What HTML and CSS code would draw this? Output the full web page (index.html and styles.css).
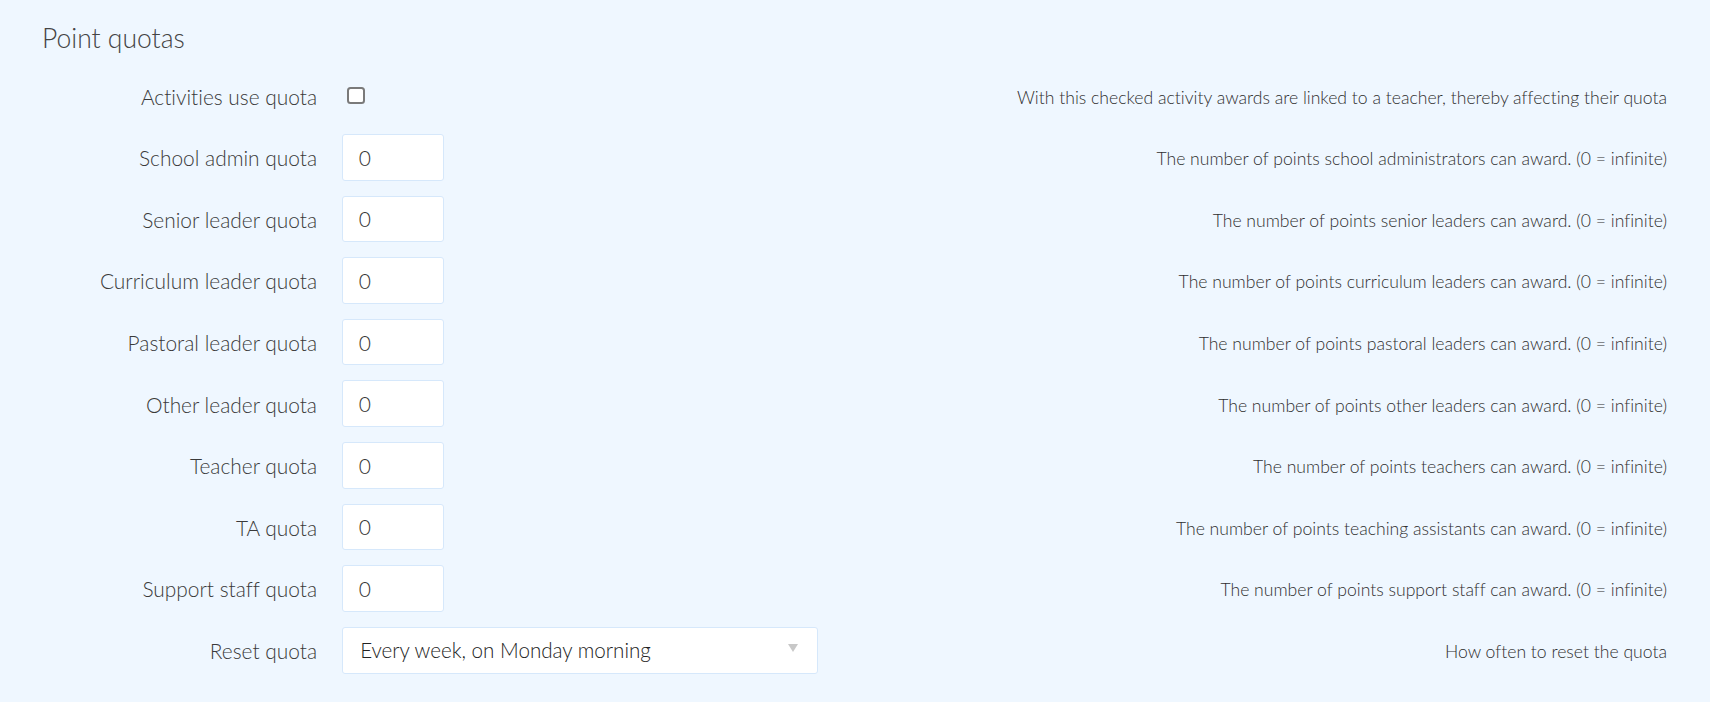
FILE: index.html
```html
<!DOCTYPE html>
<html lang="en">
<head>
<meta charset="utf-8">
<title>Point quotas</title>
<link rel="stylesheet" href="styles.css">
</head>
<body>
<div class="page">
  <h2 class="title">Point quotas</h2>
  <div class="form">
    <label class="label">Activities use quota</label>
    <div class="control"><span class="checkbox"></span></div>
    <div class="desc">With this checked activity awards are linked to a teacher, thereby affecting their quota</div>

    <label class="label">School admin quota</label>
    <div class="control"><div class="input">0</div></div>
    <div class="desc">The number of points school administrators can award. (0 = infinite)</div>

    <label class="label">Senior leader quota</label>
    <div class="control"><div class="input">0</div></div>
    <div class="desc">The number of points senior leaders can award. (0 = infinite)</div>

    <label class="label">Curriculum leader quota</label>
    <div class="control"><div class="input">0</div></div>
    <div class="desc">The number of points curriculum leaders can award. (0 = infinite)</div>

    <label class="label">Pastoral leader quota</label>
    <div class="control"><div class="input">0</div></div>
    <div class="desc">The number of points pastoral leaders can award. (0 = infinite)</div>

    <label class="label">Other leader quota</label>
    <div class="control"><div class="input">0</div></div>
    <div class="desc">The number of points other leaders can award. (0 = infinite)</div>

    <label class="label">Teacher quota</label>
    <div class="control"><div class="input">0</div></div>
    <div class="desc">The number of points teachers can award. (0 = infinite)</div>

    <label class="label">TA quota</label>
    <div class="control"><div class="input">0</div></div>
    <div class="desc">The number of points teaching assistants can award. (0 = infinite)</div>

    <label class="label">Support staff quota</label>
    <div class="control"><div class="input">0</div></div>
    <div class="desc">The number of points support staff can award. (0 = infinite)</div>

    <label class="label">Reset quota</label>
    <div class="control">
      <div class="select">
        <span>Every week, on Monday morning</span>
        <span class="arrow"></span>
      </div>
    </div>
    <div class="desc">How often to reset the quota</div>
  </div>
</div>
</body>
</html>
```
FILE: styles.css
```css
html, body {
  margin: 0;
  padding: 0;
  background: #eff7ff;
}
body {
  font-family: Lato, "Open Sans", sans-serif;
  color: #444;
  font-variant-ligatures: none;
}
.page {
  padding: 23px 43px 0 42px;
}
.title {
  margin: 0;
  font-size: 26.5px;
  font-weight: 300;
  line-height: 31px;
  color: #444;
}
.form {
  margin-top: 19px;
  display: grid;
  grid-template-columns: 275px auto 1fr;
  column-gap: 24.7px;
  row-gap: 15px;
  align-items: center;
}
.label {
  text-align: right;
  font-size: 20.9px;
  font-weight: 300;
  color: #3a3a3a;
  line-height: 44px;
  padding-top: 2px;
}
.control {
  display: flex;
  align-items: center;
}
.checkbox {
  display: block;
  width: 13.5px;
  height: 13.5px;
  margin-left: 5.6px;
  margin-top: -1px;
  border: 2px solid #7a7a7a;
  border-radius: 3.5px;
  background: #fff;
}
.input {
  box-sizing: border-box;
  width: 102px;
  height: 46.6px;
  padding-left: 16px;
  background: #fff;
  border: 1px solid #d6e8fb;
  border-radius: 3px;
  font-size: 21px;
  font-weight: 300;
  color: #333;
  display: flex;
  align-items: center;
}
.select {
  box-sizing: border-box;
  width: 476px;
  height: 47px;
  padding-left: 17.5px;
  padding-right: 19px;
  background: #fff;
  border: 1px solid #d6e8fb;
  border-radius: 3px;
  font-size: 20.6px;
  font-weight: 300;
  color: #222;
  display: flex;
  align-items: center;
  justify-content: space-between;
}
.arrow {
  width: 0;
  height: 0;
  border-left: 5.5px solid transparent;
  border-right: 5.5px solid transparent;
  border-top: 8px solid #c8c8c8;
  margin-top: -4px;
}
.desc {
  text-align: right;
  font-size: 17.6px;
  font-weight: 300;
  color: #2f2f2f;
  padding-top: 3px;
}
```
